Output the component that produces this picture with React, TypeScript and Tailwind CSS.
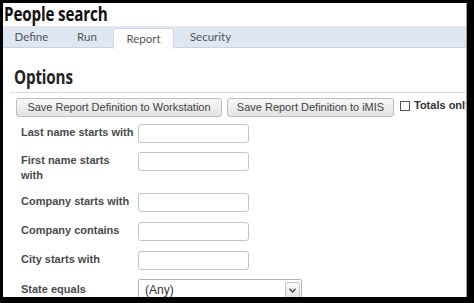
import React from "react";

const heading = { fontFamily: '"Open Sans", "Noto Sans", sans-serif' };
const arial = { fontFamily: '"Liberation Sans", Arial, sans-serif' };
const tabFont = { fontFamily: 'Lato, "Noto Sans", sans-serif' };

function Field({ label, h }: { label: React.ReactNode; h: string }) {
  return (
    <div className={`flex items-start ${h}`}>
      <div className="w-[118px] pl-[1px] pt-[1px] text-[11px] font-bold leading-[15px] text-[#4a4a4a] whitespace-nowrap" style={arial}>
        {label}
      </div>
      <div className="h-[19px] w-[111px] rounded-[3px] border border-[#c4c4c4] bg-white" />
    </div>
  );
}

export default function App() {
  return (
    <div className="w-[474px] h-[303px] bg-black pt-[3px] pl-[3px] pr-[7px] pb-[6px] overflow-hidden">
      <div className="h-full w-full bg-white overflow-hidden flex flex-col border-r border-[#9c9c9c]">
        <div className="h-[23px] shrink-0 pl-[1px] whitespace-nowrap">
          <span className="inline-block origin-left scale-x-[0.8] text-[19px] font-bold leading-[22px] text-[#111] tracking-[-0.2px]" style={heading}>
            People search
          </span>
        </div>
        <div className="h-[22px] shrink-0 flex bg-[#dfe7f3] border-b border-[#c9d2de] text-[11.5px] text-[#555]" style={tabFont}>
          <div className="w-[57px] text-center leading-[22px]">Define</div>
          <div className="ml-[2px] w-[50px] text-center leading-[22px]">Run</div>
          <div className="ml-[1px] mt-[2px] -mb-[1px] w-[61px] h-[21px] text-center leading-[19px] bg-white border border-b-0 border-[#cfd8e4] rounded-t-[2px]">Report</div>
          <div className="ml-[2px] w-[69px] text-center leading-[22px]">Security</div>
        </div>
        <div className="flex flex-col">
          <div className="mt-[18px] pl-[11px] whitespace-nowrap h-[22px]">
            <span className="inline-block origin-left scale-x-[0.8] text-[19px] font-bold leading-[22px] text-[#222] tracking-[-0.2px]" style={heading}>
              Options
            </span>
          </div>
          <div className="mt-[4px] ml-[7px] h-px bg-[#dcdcdc]" />
          <div className="mt-[5px] ml-[13px] flex items-start whitespace-nowrap">
            <button className="h-[19px] w-[206px] shrink-0 rounded-[3px] border border-[#bdbdbd] bg-gradient-to-b from-[#f7f7f7] to-[#e3e3e3] text-[11px] leading-[17px] text-[#444]" style={arial}>
              Save Report Definition to Workstation
            </button>
            <button className="ml-[5px] h-[19px] w-[167px] shrink-0 rounded-[3px] border border-[#bdbdbd] bg-gradient-to-b from-[#f7f7f7] to-[#e3e3e3] text-[11px] leading-[17px] text-[#444]" style={arial}>
              Save Report Definition to iMIS
            </button>
            <div className="ml-[6px] mt-[3px] h-[10px] w-[10px] border border-[#555] bg-white shrink-0" />
            <div className="ml-[4px] text-[11px] font-bold leading-[14px] text-[#333]" style={arial}>
              Totals only
            </div>
          </div>
          <div className="mt-[7px] pl-[17px] flex flex-col">
            <Field label="Last name starts with" h="h-[28px]" />
            <Field label={<>First name starts<br />with</>} h="h-[41px]" />
            <Field label="Company starts with" h="h-[29px]" />
            <Field label="Company contains" h="h-[29px]" />
            <Field label="City starts with" h="h-[28px]" />
            <div className="flex items-start h-[28px]">
              <div className="w-[118px] pl-[1px] pt-[3px] text-[11px] font-bold leading-[15px] text-[#4a4a4a] whitespace-nowrap" style={arial}>
                State equals
              </div>
              <div className="relative h-[21px] w-[164px] rounded-[2px] border border-[#b5b5b5] bg-white pl-[6px] text-[12px] leading-[21px] text-[#333]" style={arial}>
                (Any)
                <div className="absolute right-[1px] top-[2px] h-[17px] w-[15px] rounded-[2px] border border-[#c4c4c4] bg-gradient-to-b from-[#fafafa] to-[#e6e6e6] flex items-center justify-center">
                  <svg width="7" height="5" viewBox="0 0 7 5"><path d="M0.5 0.8 L3.5 4 L6.5 0.8" fill="none" stroke="#444" strokeWidth="1.3" /></svg>
                </div>
              </div>
            </div>
          </div>
        </div>
      </div>
    </div>
  );
}
